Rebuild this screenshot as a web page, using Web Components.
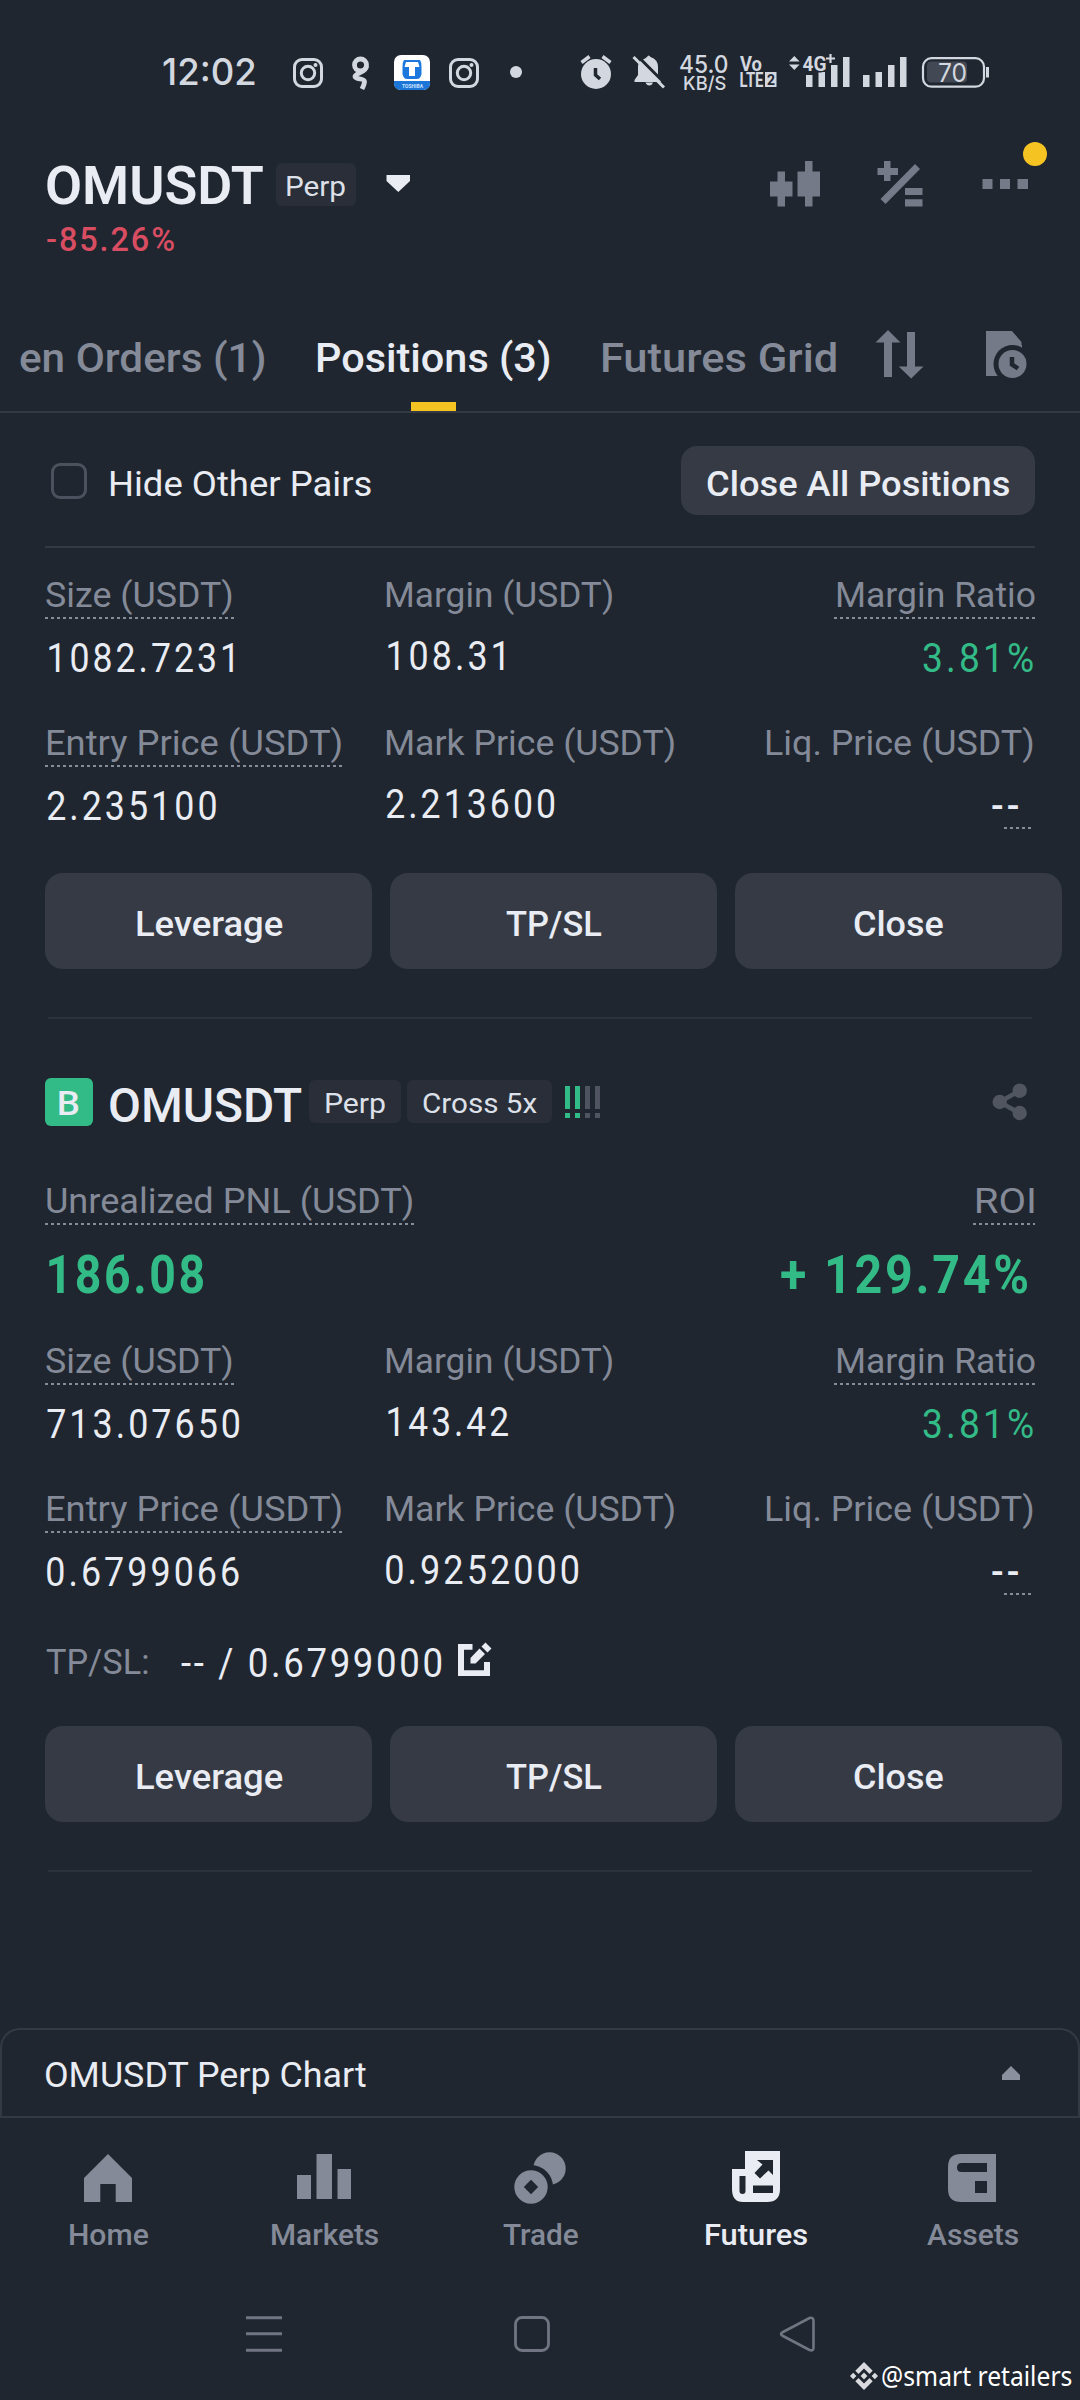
<!DOCTYPE html>
<html lang="en">
<head>
<meta charset="utf-8">
<title>OMUSDT Perp</title>
<style>
    :root {
        --bg: #1f262f;
        --text: #eaecf3;
        --muted: #848a98;
        --icon: #747a88;
        --line: #343a44;
        --button: #353a45;
        --badge: #292e39;
        --green: #33bb87;
        --red: #d84d62;
        --yellow: #f5c423;
    }
    body {
        margin: 0;
        background: var(--bg);
        color: var(--text);
        font-family: Roboto, "Liberation Sans", sans-serif;
    }
</style>
</head>
<body>
<trade-screen></trade-screen>

<script>
"use strict";

// shadow rootを作る共通クラス
class Base extends HTMLElement {
    connectedCallback() {
        if (this.shadowRoot) return;
        this.attachShadow({mode: "open"}).innerHTML = this.render();
        this.ready();
    }
    render() { return "<slot></slot>"; }
    ready() {}
}


// icons: box is the viewBox, body is the drawing
const insta = (x) => `
    <rect x="${x + 1.5}" y="59.5" width="27" height="27" rx="7.5" fill="none" stroke="currentColor" stroke-width="3"/>
    <circle cx="${x + 15}" cy="73" r="6.7" fill="none" stroke="currentColor" stroke-width="3"/>
    <circle cx="${x + 22.5}" cy="65" r="2"/>`;

const bars = (x) => `<path d="M${x} 75h6.5v12h-6.5zM${x + 12.5} 72h6.5v15h-6.5zM${x + 25} 65h6.5v22h-6.5zM${x + 37} 57h6.5v30h-6.5z"/>`;

const ICONS = {
    insta: {box: [293, 50, 30, 44], body: insta(293)},
    ribbon: {box: [350, 50, 20, 44], body: `<circle cx="360.500" cy="65" r="6" fill="none" stroke="currentColor" stroke-width="4.800"/><path d="M366.500 66C366 73 355 73 355 76.500C356 80 364 77.500 364.500 81.500Q364.500 84 362 89" fill="none" stroke="currentColor" stroke-width="4.800"/>`},
    app: {box: [394, 50, 36, 44], body: `
        <rect x="394" y="55" width="36" height="35" rx="7" fill="#fff"/>
        <path d="M394 81h36v2q0 7-7 7h-22q-7 0-7-7z" fill="#1c76d8"/>
        <path d="M404 60h16q2 3 1.500 7v7q-1 5-4.500 5h-10q-3.500 0-4.500-5v-7q-.5-4 1.500-7z" fill="#1c78dc"/>
        <path d="M406 62h12l1.500 5h-4.500v9h-6v-9h-4.500z" fill="#fff"/>
        <text x="402" y="88" font-size="6" font-weight="700" fill="#cfe4ff" textLength="21" lengthAdjust="spacingAndGlyphs">TOSHIBA</text>`},
    dot: {box: [510, 50, 12, 44], body: `<circle cx="516" cy="72" r="6"/>`},
    alarm: {box: [580, 50, 32, 44], body: `
        <circle cx="596" cy="74" r="15"/>
        <path d="M581.500 62.500l8-6M610.500 62.500l-8-6" stroke="currentColor" stroke-width="3.500"/>
        <path d="M595.500 68v7l4.500 4" fill="none" stroke="var(--bg)" stroke-width="3.500"/>`},
    bell: {box: [632, 50, 34, 44], body: `
        <path d="M645 58.500q1.500-1.500 2-1.500q1.500-3 3.500 0q7.500 2.500 7.500 10v8l3 5v2h-26.500v-2l3.500-5v-9q.5-4 3-5.500z"/>
        <path d="M645.500 82.500h7.500q-1 3-3.700 3t-3.800-3z"/>
        <path d="M636 54.500l31 31" stroke="var(--bg)" stroke-width="3"/>
        <path d="M633.500 57l30.500 30.500" stroke="currentColor" stroke-width="3"/>`},
    volte: {box: [740, 50, 37, 44], body: `
        <text x="740" y="71" font-size="19.500" font-weight="700" textLength="22" lengthAdjust="spacingAndGlyphs">Vo</text>
        <text x="739.500" y="87" font-size="19.500" font-weight="700" textLength="24" lengthAdjust="spacingAndGlyphs">LTE</text>
        <path d="M765 72h11.500v15h-11.500z"/>
        <text x="767" y="84.500" font-size="14.500" font-weight="700" fill="var(--bg)" textLength="8" lengthAdjust="spacingAndGlyphs">2</text>`},
    signal4g: {box: [789, 50, 61, 44], body: `
        <path d="M789 61.500l5.300-5.500 5.300 5.500zM789 64.500l5.300 5.500 5.300-5.500z"/>
        ${bars(806)}
        <text x="802.500" y="70.500" font-size="20.500" font-weight="700" stroke="var(--bg)" stroke-width="3" paint-order="stroke" textLength="24" lengthAdjust="spacingAndGlyphs">4G</text>
        <path d="M826 58.500h9M830.500 54v9" stroke="currentColor" stroke-width="2.200"/>`},
    signal: {box: [863, 50, 44, 44], body: bars(863)},
    battery: {box: [922, 50, 68, 44], body: `
        <rect x="927" y="61.500" width="40" height="21" rx="4" fill="#434954"/>
        <rect x="923" y="58.200" width="61" height="28.500" rx="8.500" fill="none" stroke="currentColor" stroke-width="2.200"/>
        <path d="M986 67h3v10.500h-3z"/>
        <text x="938" y="81.500" font-family="Inter, sans-serif" font-size="25" textLength="29" lengthAdjust="spacingAndGlyphs">70</text>`},
    caret: {box: [386, 174, 25, 19], body: `<path d="M386.500 175h23.500v6l-11.700 11-11.800-11z"/>`},
    candles: {box: [769, 160, 52, 48], body: `<path d="M777.500 171.500h7.500v10h7.500v15h-7.500v10h-7.500v-10h-7.500v-15h7.500zM805 161h7.500v10.500h7.500v25h-7.500v10h-7.500v-10h-7.500v-25h7.500z"/>`},
    calc: {box: [877, 160, 46, 48], body: `<path d="M884 161h6.500v7h7.500v7h-7.500v6h-6.500v-6h-6.500v-7h6.500zM905 188h17.500v7h-17.500zM905 199.300h17.500v7.200h-17.500z"/><path d="M917.500 166.500l-34.500 35" stroke="currentColor" stroke-width="7"/>`},
    more: {box: [982, 160, 46, 48], body: `<path d="M982.500 179h10v10h-10zM1000 179h10v10h-10zM1017.500 179h10.500v10h-10.500z"/>`},
    sort: {box: [875, 329, 49, 50], body: `<path d="M888 330l12.500 12.500h-8.500v34.500h-8v-34.500h-8.500zM907 332h8v34.500h8.500l-12.300 12-12.500-12h8.300z"/>`},
    history: {box: [985, 329, 42, 50], body: `
        <path d="M986 331h26l9.500 11v10h-35.500zM986 345h36v12l-24 19h-12z"/>
        <circle cx="1012.500" cy="364" r="19" fill="var(--bg)"/>
        <circle cx="1012.500" cy="364" r="14"/>
        <path d="M1012 357v7.500l6 4" fill="none" stroke="var(--bg)" stroke-width="4.500"/>`},
    risk: {box: [565, 1086, 35, 32], body: `<path fill="var(--green)" d="M565 1086h5v23h-5zM575 1086h5v23h-5zM565 1113h5v5h-5zM575 1113h5v5h-5z"/><path fill="#4f5460" d="M585 1086h5v23h-5zM595 1086h5v23h-5zM585 1113h5v5h-5zM595 1113h5v5h-5z"/>`},
    share: {box: [992, 1083, 36, 38], body: `<path d="M1019.700 1090.700l-20 11.300 20 11.300" fill="none" stroke="currentColor" stroke-width="4.500"/><circle cx="1019.700" cy="1090.700" r="7.200"/><circle cx="999.700" cy="1102" r="7.200"/><circle cx="1019.700" cy="1113" r="7.200"/>`},
    edit: {box: [457, 1642, 36, 35], body: `<path d="M458 1644h14.500v5.700h-8.500v20.600h20v-8.300h6v14h-32zM470.500 1658l9-9.500 5.500 5.500-9.500 9.500h-5zM481.500 1646.500l4-4 6 6-4 4z"/>`},
    up: {box: [1001, 2065, 20, 16], body: `<path d="M1011 2066l9 9v5h-18v-5z"/>`},
    home: {box: [78, 2148, 60, 60], body: `<path d="M108 2154l24 24v24h-16.300v-18h-15.400v18h-16.300v-24z"/>`},
    markets: {box: [294, 2148, 60, 60], body: `<path d="M297 2175h14v24h-14zM316.500 2154h15.500v45h-15.500zM337.500 2169h13.500v30h-13.500z"/>`},
    trade: {box: [510, 2148, 60, 60], body: `<circle cx="549.500" cy="2168.500" r="16.200"/><circle cx="531" cy="2187" r="22" fill="var(--bg)"/><circle cx="531" cy="2187" r="16.700"/><path d="M531 2179.800l7.200 7.200-7.200 7.200-7.200-7.200z" fill="var(--bg)"/>`},
    futures: {box: [726, 2148, 60, 60], body: `
        <path d="M745 2151h35v38q0 13-13 13h-24q-11 0-11-13v-20h13z"/>
        <g fill="var(--bg)"><path d="M739.500 2176h6v15q0 3-3 3t-3-3zM753 2185.500h20v7.500h-20zM757 2160h16v15l-4.500-4.500-8.500 8-5.500-5.500 8-8.500z"/></g>`},
    assets: {box: [942, 2148, 60, 60], body: `
        <path d="M961 2154h35v48h-35q-13 0-13-13v-22q0-13 13-13z"/>
        <path d="M961.500 2163h25.500v9h-25.500q-4.500 0-4.500-4.500t4.500-4.500zM975 2181h12v12h-12z" fill="var(--bg)"/>`},
    recents: {box: [246, 2315, 36, 38], body: `<path d="M246 2317.700h36M246 2333.700h36M246 2350.300h36" stroke="currentColor" stroke-width="3"/>`},
    desktop: {box: [513, 2315, 38, 38], body: `<rect x="515.500" y="2317.500" width="33" height="33" rx="6.500" fill="none" stroke="currentColor" stroke-width="2.800"/>`},
    back: {box: [779, 2315, 38, 38], body: `<path d="M783 2332l26.500-14q4-1 4 3v26.500q0 4-4 2.500l-26.500-14q-4-2 0-4z" fill="none" stroke="currentColor" stroke-width="2.600"/>`},
    binance: {box: [850, 2361, 29, 30], body: `<path d="M864 2362l8.700 8.800-3.200 3.200-5.500-5.500-5.500 5.500-3.200-3.200zM864 2390l8.700-8.800-3.200-3.200-5.500 5.500-5.500-5.500-3.200 3.200zM853.200 2372.800l3.200 3.200-3.200 3.200-3.200-3.200zM874.800 2372.800l3.200 3.200-3.200 3.200-3.200-3.200zM864 2372.600l3.400 3.400-3.400 3.400-3.400-3.400z"/>`},
};

class UiIcon extends Base {
    render() {
        const {box, body} = ICONS[this.getAttribute("name")];
        return `
            <style>
                :host { display: block; flex: none; }
                svg { display: block; overflow: visible; fill: currentColor; }
            </style>
            <svg width="${box[2]}" height="${box[3]}" viewBox="${box.join(" ")}">${body}</svg>`;
    }
}


// fit-text: a line of text whose ink is exactly w pixels wide
class FitText extends Base {
    render() {
        return `
            <style>
                :host { display: block; flex: none; white-space: nowrap; }
                span { display: block; width: max-content; transform-origin: 0 50%; }
            </style>
            <span><slot></slot></span>`;
    }
    ready() {
        const w = Number(this.getAttribute("w"));
        const cs = getComputedStyle(this);
        const ctx = document.createElement("canvas").getContext("2d");
        ctx.font = `${cs.fontWeight} ${cs.fontSize} ${cs.fontFamily}`;
        const text = this.textContent;
        const m = ctx.measureText(text);
        // letter-spacing widens every gap but the last one
        const gaps = (parseFloat(cs.letterSpacing) || 0) * (text.length - 1);
        const k = w / (m.actualBoundingBoxLeft + m.actualBoundingBoxRight + gaps);
        this.style.width = w + "px";
        this.style.marginLeft = (this.getAttribute("x") || 0) + "px";
        this.style.marginRight = (this.getAttribute("r") || 0) + "px";
        this.shadowRoot.querySelector("span").style.transform =
            `translateX(${m.actualBoundingBoxLeft * k}px) scaleX(${k})`;
    }
}


class StatusBar extends Base {
    render() {
        return `
            <style>
                :host { display: flex; height: 44px; padding: 50px 0 0 163px; color: #d3d7df; }
                .time { font-family: Inter, sans-serif; font-size: 37px; font-weight: 500; line-height: 44px; }
                .speed { margin: 5px 0 0 14px; font-family: Inter, sans-serif; font-weight: 500; line-height: 19px; }
                .speed :first-child { font-size: 24px; }
                .speed :last-child { font-size: 19px; }
            </style>
            <fit-text class="time" w="92">12:02</fit-text>
            <ui-icon name="insta" style="margin-left:38px"></ui-icon>
            <ui-icon name="ribbon" style="margin-left:27px"></ui-icon>
            <ui-icon name="app" style="margin-left:24px"></ui-icon>
            <ui-icon name="insta" style="margin-left:19px"></ui-icon>
            <ui-icon name="dot" style="margin-left:31px"></ui-icon>
            <ui-icon name="alarm" style="margin-left:58px"></ui-icon>
            <ui-icon name="bell" style="margin-left:20px"></ui-icon>
            <div class="speed"><fit-text w="48">45.0</fit-text><fit-text w="42" x="4">KB/S</fit-text></div>
            <ui-icon name="volte" style="margin-left:12px"></ui-icon>
            <ui-icon name="signal4g" style="margin-left:12px"></ui-icon>
            <ui-icon name="signal" style="margin-left:13px"></ui-icon>
            <ui-icon name="battery" style="margin-left:15px"></ui-icon>`;
    }
}


class TagBadge extends Base {
    render() {
        return `
            <style>
                :host {
                    display: flex; justify-content: center; flex: none;
                    box-sizing: border-box; height: 43px; padding-top: 3px;
                    border-radius: 6px; background: var(--badge);
                    font-size: 28.500px; line-height: 42px; color: #dde0e8;
                }
            </style>
            <slot></slot>`;
    }
}


class PairHeader extends Base {
    render() {
        return `
            <style>
                :host { display: block; height: 212px; padding: 53px 45px 0 47px; box-sizing: border-box; }
                .row { display: flex; align-items: flex-start; height: 60px; }
                .pair { font-size: 53.500px; font-weight: 600; line-height: 60px; margin-top: 9px; }
                .change { font-size: 34px; font-weight: 500; line-height: 40px; color: var(--red); margin-top: 12px; letter-spacing: 2px; }
                tag-badge { width: 80px; margin: 16px 0 0 13px; }
                .caret { margin: 27px 0 0 30px; }
                .tool { color: var(--icon); margin-top: 13px; }
                .more { position: relative; }
                /* 未読マーク */
                .more i { position: absolute; left: 41px; top: -18px; width: 24px; height: 24px; border-radius: 50%; background: var(--yellow); }
            </style>
            <div class="row">
                <fit-text class="pair" w="216">OMUSDT</fit-text>
                <tag-badge><fit-text w="58">Perp</fit-text></tag-badge>
                <ui-icon class="caret" name="caret"></ui-icon>
                <ui-icon class="tool" name="candles" style="margin-left:358px"></ui-icon>
                <ui-icon class="tool" name="calc" style="margin-left:56px"></ui-icon>
                <div class="tool more" style="margin-left:59px"><ui-icon name="more"></ui-icon><i></i></div>
            </div>
            <fit-text class="change" w="127">-85.26%</fit-text>`;
    }
}


class TabStrip extends Base {
    render() {
        return `
            <style>
                :host {
                    display: flex; align-items: flex-start; box-sizing: border-box;
                    height: 107px; padding-left: 20px; border-bottom: 2px solid var(--line);
                    color: var(--muted); font-size: 41px; font-weight: 500; line-height: 50px;
                }
                fit-text { margin-top: 27px; }
                .tab { display: flex; flex-direction: column; align-items: center; height: 105px; margin-left: 53px; }
                .tab i { width: 45px; height: 9px; background: var(--yellow); margin-top: auto; }
                .on { color: var(--text); }
                ui-icon { margin-top: 23px; color: var(--icon); }
            </style>
            <fit-text w="244">en Orders (1)</fit-text>
            <div class="tab on"><fit-text w="232">Positions (3)</fit-text><i></i></div>
            <div class="tab" style="margin-left:53px"><fit-text w="234">Futures Grid</fit-text></div>
            <ui-icon name="sort" style="margin-left:39px"></ui-icon>
            <ui-icon name="history" style="margin-left:61px"></ui-icon>`;
    }
}


class FilterRow extends Base {
    render() {
        return `
            <style>
                :host {
                    display: flex; align-items: center; box-sizing: border-box;
                    height: 135px; margin: 0 45px; padding: 2px 0 0 6px; border-bottom: 2px solid var(--line);
                    font-size: 35.500px; line-height: 44px;
                }
                .box { width: 36px; height: 36px; box-sizing: border-box; border: 3px solid #4b515d; border-radius: 9px; margin-right: 23px; }
                .all {
                    display: flex; justify-content: center; align-items: center; margin-left: auto;
                    width: 354px; height: 69px; padding-top: 6px; box-sizing: border-box;
                    border-radius: 16px; background: var(--button); font-weight: 500;
                }
                .label { margin-top: 6px; }
            </style>
            <div class="box"></div>
            <fit-text class="label" w="261">Hide Other Pairs</fit-text>
            <div class="all"><fit-text w="302">Close All Positions</fit-text></div>`;
    }
}


// stat-cell: label + value, "dotted" draws the hint line below the label
class StatCell extends Base {
    render() {
        return `
            <style>
                :host { display: flex; flex-direction: column; align-items: flex-start; height: 110px; }
                :host([end]) { align-items: flex-end; }
                .label {
                    height: 46px; line-height: 46px; font-size: 35px; color: var(--muted);
                    box-sizing: border-box; display: flex;
                }
                :host([dotted]) .label, .hint {
                    background: repeating-linear-gradient(90deg, #868c98 0 3px, transparent 3px 6px) 0 100% / 100% 2px no-repeat;
                }
                .value { margin-top: 14px; height: 50px; line-height: 50px; font-size: 41.500px; letter-spacing: 3.500px; display: flex; }
                :host([raised]) .value { margin-top: 12px; }
                :host([big]) .value { margin-top: 20px; height: 60px; line-height: 60px; font-size: 53px; font-weight: 700; letter-spacing: 3px; }
                :host([green]) .value { color: var(--green); }
                :host([hint]) .value { font-weight: 500; }
                .hint { width: 28px; height: 2px; margin: -4px 3px 0 0; }
            </style>
            <div class="label"><slot name="label"></slot></div>
            <div class="value"><slot></slot></div>
            ${this.hasAttribute("hint") ? `<div class="hint"></div>` : ""}`;
    }
}


class StatGrid extends Base {
    render() {
        return `
            <style>
                :host { display: grid; grid-template-columns: 341px 340px 1fr; row-gap: 38px; margin: 0 45px; }
            </style>
            <slot></slot>`;
    }
}


class ActionRow extends Base {
    render() {
        return `
            <style>
                :host { display: flex; gap: 18px; margin-left: 45px; font-size: 35px; font-weight: 500; line-height: 44px; }
                div {
                    display: flex; align-items: center; justify-content: center; flex: none;
                    width: 327px; height: 96px; padding-top: 7px; box-sizing: border-box;
                    border-radius: 18px; background: var(--button);
                }
            </style>
            <div><fit-text w="145.500" x="1.500">Leverage</fit-text></div>
            <div><fit-text w="96">TP/SL</fit-text></div>
            <div><fit-text w="89">Close</fit-text></div>`;
    }
}


class CardRule extends Base {
    render() {
        return `<style>:host { display: block; height: 2px; margin: 48px 48px 0; background: #2c323c; }</style>`;
    }
}


class PositionTitle extends Base {
    render() {
        return `
            <style>
                :host { display: flex; align-items: flex-start; height: 48px; margin: 59px 52px 0 45px; }
                .side {
                    display: flex; justify-content: center; width: 48px; height: 48px; border-radius: 6px;
                    background: var(--green); font-size: 33px; font-weight: 500; line-height: 51px;
                }
                .pair { font-size: 48px; font-weight: 500; line-height: 55px; }
                tag-badge { margin-top: 2px; }
                ui-icon { margin-top: 8px; }
                .share { margin: 5px 0 0 auto; color: #50555f; }
            </style>
            <div class="side"><fit-text w="20">B</fit-text></div>
            <fit-text class="pair" w="192" x="17">OMUSDT</fit-text>
            <tag-badge style="width:92px;margin-left:7px"><fit-text w="59">Perp</fit-text></tag-badge>
            <tag-badge style="width:145px;margin-left:6px"><fit-text w="114">Cross 5x</fit-text></tag-badge>
            <ui-icon name="risk" style="margin-left:13px"></ui-icon>
            <ui-icon class="share" name="share"></ui-icon>`;
    }
}


class ChartPanel extends Base {
    render() {
        return `
            <style>
                :host { display: block; height: 90px; box-sizing: border-box; border-bottom: 2px solid var(--line); }
                div {
                    display: flex; align-items: center; justify-content: space-between;
                    height: 88px; box-sizing: border-box; padding: 5px 57px 0 43px;
                    border: 2px solid var(--line); border-bottom: 0; border-radius: 20px 20px 0 0;
                    font-size: 35px; line-height: 44px;
                }
                ui-icon { color: #8a909e; margin-top: -5px; }
            </style>
            <div><fit-text w="321" x="1">OMUSDT Perp Chart</fit-text><ui-icon name="up"></ui-icon></div>`;
    }
}


class NavItem extends Base {
    render() {
        return `
            <style>
                :host { display: flex; flex-direction: column; align-items: center; color: var(--muted); }
                :host([active]) { color: var(--text); }
                div { margin-top: 9px; font-size: 29.500px; font-weight: 500; line-height: 36px; }
            </style>
            <ui-icon name="${this.getAttribute("icon")}"></ui-icon>
            <div><slot></slot></div>`;
    }
}


class BottomNav extends Base {
    render() {
        return `
            <style>
                :host { display: grid; grid-template-columns: repeat(5, 1fr); padding-top: 30px; height: 105px; }
            </style>
            <nav-item icon="home"><fit-text w="78" x="1.500">Home</fit-text></nav-item>
            <nav-item icon="markets"><fit-text w="106" x="1.500">Markets</fit-text></nav-item>
            <nav-item icon="trade"><fit-text w="75">Trade</fit-text></nav-item>
            <nav-item icon="futures" active><fit-text w="101">Futures</fit-text></nav-item>
            <nav-item icon="assets"><fit-text w="91">Assets</fit-text></nav-item>`;
    }
}


class SystemNav extends Base {
    render() {
        return `
            <style>
                :host { display: block; height: 147px; box-sizing: border-box; padding-top: 62px; color: #717582; }
                .keys { display: flex; padding-left: 246px; }
                .mark { display: flex; margin: 8px 0 0 850px; gap: 3px; color: #d9dbdf; }
                .mark fit-text { font: 28px/30px "Noto Sans", sans-serif; color: #fff; margin-top: -1px; }
            </style>
            <div class="keys">
                <ui-icon name="recents"></ui-icon>
                <ui-icon name="desktop" style="margin-left:231px"></ui-icon>
                <ui-icon name="back" style="margin-left:228px"></ui-icon>
            </div>
            <div class="mark"><ui-icon name="binance"></ui-icon><fit-text w="190">@smart retailers</fit-text></div>`;
    }
}


class TradeScreen extends Base {
    render() {
        return `
            <style>
                :host { display: flex; flex-direction: column; width: 1080px; height: 2400px; overflow: hidden; }
                .tpsl { display: flex; height: 50px; margin: 41px 0 38px 45px; font-size: 41.500px; line-height: 50px; letter-spacing: 3px; }
                .tpsl :first-child { color: var(--muted); font-size: 35px; letter-spacing: 0; }
                .tpsl ui-icon { margin: 4px 0 0 16px; }
                .pnl { display: flex; justify-content: space-between; margin: 53px 45px 34px; }
                .pnl stat-cell { height: 126px; }
                .fill { flex: 1; }
            </style>
            <status-bar></status-bar>
            <pair-header></pair-header>
            <tab-strip></tab-strip>
            <filter-row></filter-row>

            <stat-grid style="margin-top:25px">
                <stat-cell dotted><fit-text slot="label" w="185.500" x="1" r="2.500">Size (USDT)</fit-text><fit-text w="184" x="3.500">1082.7231</fit-text></stat-cell>
                <stat-cell raised><fit-text slot="label" w="226">Margin (USDT)</fit-text><fit-text w="115.500" x="2">108.31</fit-text></stat-cell>
                <stat-cell dotted end green><fit-text slot="label" w="198" x="3">Margin Ratio</fit-text><fit-text w="110" r="2">3.81%</fit-text></stat-cell>
                <stat-cell dotted><fit-text slot="label" w="294" x="2" r="1">Entry Price (USDT)</fit-text><fit-text w="168.500" x="1.500">2.235100</fit-text></stat-cell>
                <stat-cell raised><fit-text slot="label" w="288">Mark Price (USDT)</fit-text><fit-text w="168">2.213600</fit-text></stat-cell>
                <stat-cell end hint><fit-text slot="label" w="266.500" r="2.500">Liq. Price (USDT)</fit-text><fit-text w="26.500" r="17">--</fit-text></stat-cell>
            </stat-grid>
            <action-row style="margin-top:42px"></action-row>
            <card-rule></card-rule>

            <position-title></position-title>
            <div class="pnl">
                <stat-cell dotted big green><fit-text slot="label" w="365" x="2" r="2">Unrealized PNL (USDT)</fit-text><fit-text w="154" x="4">186.08</fit-text></stat-cell>
                <stat-cell dotted big green end><fit-text slot="label" w="58" x="3" r="1">ROI</fit-text><fit-text w="246" r="8">+ 129.74%</fit-text></stat-cell>
            </div>
            <stat-grid>
                <stat-cell dotted><fit-text slot="label" w="185.500" x="1" r="2.500">Size (USDT)</fit-text><fit-text w="192" x="1.500">713.07650</fit-text></stat-cell>
                <stat-cell raised><fit-text slot="label" w="226">Margin (USDT)</fit-text><fit-text w="120" x="2">143.42</fit-text></stat-cell>
                <stat-cell dotted end green><fit-text slot="label" w="198" x="3">Margin Ratio</fit-text><fit-text w="110" r="2">3.81%</fit-text></stat-cell>
                <stat-cell dotted><fit-text slot="label" w="294" x="2" r="1">Entry Price (USDT)</fit-text><fit-text w="192" x="1.500">0.6799066</fit-text></stat-cell>
                <stat-cell raised><fit-text slot="label" w="288">Mark Price (USDT)</fit-text><fit-text w="192">0.9252000</fit-text></stat-cell>
                <stat-cell end hint><fit-text slot="label" w="266.500" r="2.500">Liq. Price (USDT)</fit-text><fit-text w="26.500" r="17">--</fit-text></stat-cell>
            </stat-grid>
            <div class="tpsl">
                <fit-text w="102" x="1">TP/SL:</fit-text>
                <fit-text w="260" x="33">-- / 0.6799000</fit-text>
                <ui-icon name="edit"></ui-icon>
            </div>
            <action-row></action-row>
            <card-rule></card-rule>

            <div class="fill"></div>
            <chart-panel></chart-panel>
            <bottom-nav></bottom-nav>
            <system-nav></system-nav>`;
    }
}


customElements.define("trade-screen", TradeScreen);
customElements.define("status-bar", StatusBar);
customElements.define("pair-header", PairHeader);
customElements.define("tab-strip", TabStrip);
customElements.define("filter-row", FilterRow);
customElements.define("stat-grid", StatGrid);
customElements.define("stat-cell", StatCell);
customElements.define("action-row", ActionRow);
customElements.define("card-rule", CardRule);
customElements.define("position-title", PositionTitle);
customElements.define("chart-panel", ChartPanel);
customElements.define("bottom-nav", BottomNav);
customElements.define("nav-item", NavItem);
customElements.define("system-nav", SystemNav);
customElements.define("tag-badge", TagBadge);
customElements.define("ui-icon", UiIcon);
// fit-text measures its inherited font, so the elements around it come first
customElements.define("fit-text", FitText);
</script>
</body>
</html>
